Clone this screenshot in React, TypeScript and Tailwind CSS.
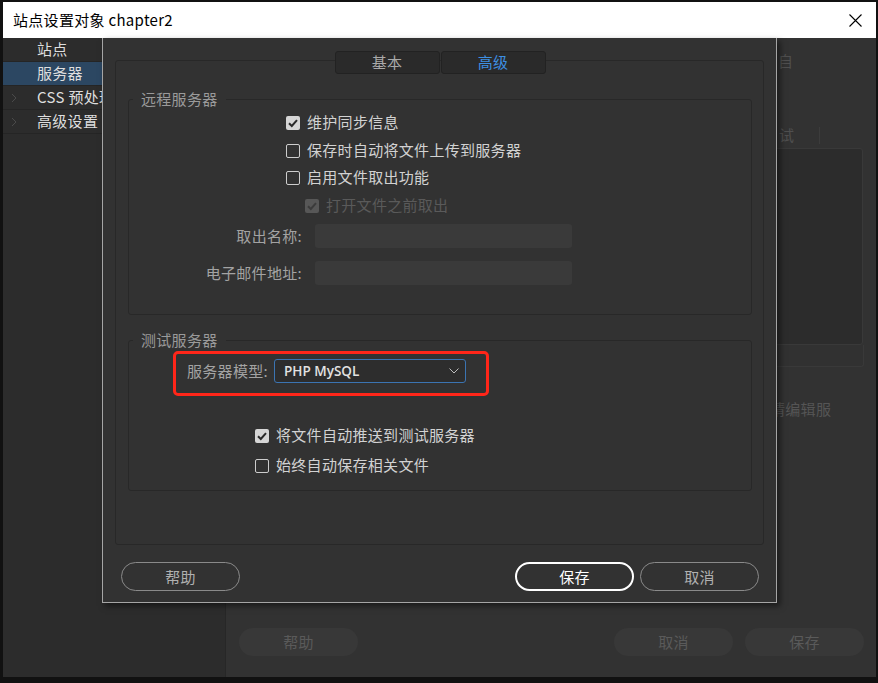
import React from "react";

const cjk = "font-['Noto_Sans_CJK_SC','Noto_Sans',sans-serif] tracking-[0.3px]";

function Tick({ color }: { color: string }) {
  return (
    <svg width="14" height="14" viewBox="0 0 14 14">
      <polyline points="3,7.2 5.8,10 11,4.2" fill="none" stroke={color} strokeWidth="2" />
    </svg>
  );
}

function Checkbox({ checked, disabled }: { checked?: boolean; disabled?: boolean }) {
  if (disabled) {
    return (
      <span className="flex h-[14px] w-[14px] shrink-0 items-center justify-center rounded-[2px] bg-[#575757]">
        <Tick color="#3b3b3b" />
      </span>
    );
  }
  if (checked) {
    return (
      <span className="flex h-[14px] w-[14px] shrink-0 items-center justify-center rounded-[2px] bg-[#d6d6d6]">
        <Tick color="#2a2a2a" />
      </span>
    );
  }
  return <span className="h-[14px] w-[14px] shrink-0 rounded-[2px] border border-[#cdcdcd]" />;
}

function CheckRow({
  label,
  checked,
  disabled,
  className,
}: {
  label: string;
  checked?: boolean;
  disabled?: boolean;
  className: string;
}) {
  return (
    <div className={`flex items-center gap-[7px] ${className}`}>
      <Checkbox checked={checked} disabled={disabled} />
      <span className={`-mt-[2px] ${disabled ? "text-[#5a5a5a]" : "text-[#d2d2d2]"}`}>{label}</span>
    </div>
  );
}

function Chevron() {
  return (
    <svg width="6" height="10" viewBox="0 0 6 10">
      <polyline points="1,1 5,5 1,9" fill="none" stroke="#4a4a4a" strokeWidth="1" />
    </svg>
  );
}

const sideItems = [
  { label: "站点", arrow: false, active: false },
  { label: "服务器", arrow: false, active: true },
  { label: "CSS 预处理器", arrow: true, active: false },
  { label: "高级设置", arrow: true, active: false },
];

function Sidebar() {
  return (
    <aside className="w-[223px] shrink-0 border-r border-[#272727] bg-[#2c2c2c]">
      {sideItems.map((it) => (
        <div
          key={it.label}
          className={`flex h-[24px] items-center border-b border-[#252525] ${it.active ? "bg-[#2c4762]" : ""}`}
        >
          <span className="flex w-[34px] shrink-0 pl-[8px]">{it.arrow && <Chevron />}</span>
          <span className="whitespace-nowrap text-[15px] text-[#dedede]">{it.label}</span>
        </div>
      ))}
    </aside>
  );
}

function Background() {
  return (
    <main className="flex flex-1 flex-col bg-[#323232]">
      <div className="flex flex-1 flex-col pl-[532px] pr-[12px] pt-[13px] text-[15px] leading-[20px] text-[#4f4f4f]">
        <div className="ml-[20px]">自</div>
        <div className="mt-[54px] flex h-[20px] items-center">
          <span className="ml-[21px]">试</span>
          <span className="ml-[25px] h-[17px] w-px bg-[#3c3c3c]" />
        </div>
        <div className="mr-[1px] mt-[3px] h-[197px] rounded-[3px] border border-[#393939] bg-[#2c2c2c]" />
        <div className="h-[22px] rounded-b-[3px] border border-t-0 border-[#393939] bg-[#313131]" />
        <div className="ml-[12px] mt-[32px] text-[#555]">请编辑服</div>
      </div>
      <div className="flex items-center pb-[21px] pl-[13px] pr-[12px] text-[15px] text-[#5a5a5a]">
        <button className="flex h-[28px] w-[119px] items-center justify-center rounded-full bg-[#383838]">帮助</button>
        <button className="ml-auto flex h-[28px] w-[119px] items-center justify-center rounded-full bg-[#383838]">取消</button>
        <button className="ml-[12px] flex h-[28px] w-[119px] items-center justify-center rounded-full bg-[#383838]">保存</button>
      </div>
    </main>
  );
}

function Overlay() {
  return (
    <div className="absolute left-[99px] top-[36px] flex h-[565px] w-[675px] flex-col border-x border-b border-[#a5a5a5] bg-[#323232] px-[12px] pb-[11px] pt-[22px] text-[15px] leading-[20px] shadow-[3px_3px_6px_rgba(0,0,0,0.5)]">
      <div className="h-[485px] rounded-[3px] border border-[#282828] pl-[12px] pr-[11px]">
        <div className="-mt-[10px] flex justify-center gap-[1px]">
          <div className="flex h-[23px] w-[105px] items-center justify-center rounded-[3px] border border-[#222] bg-[#2a2a2a] pb-[1px] text-[#a9a9a9]">
            基本
          </div>
          <div className="flex h-[23px] w-[105px] items-center justify-center rounded-[3px] border border-[#222] bg-[#2a2a2a] pb-[1px] text-[#3d8fe2]">
            高级
          </div>
        </div>

        <fieldset className="mt-[15px] rounded-[3px] border border-[#282828] pb-[29px]">
          <legend className="ml-[4px] px-[8px] text-[#9a9a9a]">远程服务器</legend>
          <CheckRow className="ml-[157px] h-[28px]" label="维护同步信息" checked />
          <CheckRow className="ml-[157px] h-[27px]" label="保存时自动将文件上传到服务器" />
          <CheckRow className="ml-[157px] h-[28px]" label="启用文件取出功能" />
          <CheckRow className="ml-[176px] h-[28px]" label="打开文件之前取出" checked disabled />
          <div className="mt-[4px] flex h-[24px] items-center">
            <span className="w-[173px] text-right text-[#a3a3a3]">取出名称:</span>
            <span className="ml-[13px] h-[24px] w-[257px] rounded-[3px] bg-[#3a3a3a]" />
          </div>
          <div className="mt-[13px] flex h-[24px] items-center">
            <span className="w-[173px] text-right text-[#a3a3a3]">电子邮件地址:</span>
            <span className="ml-[13px] h-[24px] w-[257px] rounded-[3px] bg-[#3a3a3a]" />
          </div>
        </fieldset>

        <fieldset className="mt-[15px] rounded-[3px] border border-[#282828] pb-[9px]">
          <legend className="ml-[4px] px-[8px] text-[#9a9a9a]">测试服务器</legend>
          <div className="ml-[44px] mt-[1px] flex h-[45px] w-[316px] items-start rounded-[5px] border-[3px] border-[#ff2619] pl-[11px] pt-[5px]">
            <span className="flex h-[24px] w-[87px] items-center text-[#a3a3a3]">服务器模型:</span>
            <div className="flex h-[24px] w-[192px] items-center justify-between rounded-[3px] border border-[#3b74b2] bg-[#2d2d2d] pl-[9px] pr-[6px]">
              <span className="font-['Open_Sans',sans-serif] text-[13.5px] font-semibold tracking-normal text-[#e2e2e2]">PHP MySQL</span>
              <svg width="10" height="6" viewBox="0 0 10 6">
                <polyline points="0.5,0.5 5,5 9.5,0.5" fill="none" stroke="#bdbdbd" strokeWidth="1" />
              </svg>
            </div>
          </div>
          <CheckRow className="ml-[126px] mt-[25px] h-[30px]" label="将文件自动推送到测试服务器" checked />
          <CheckRow className="ml-[126px] h-[30px]" label="始终自动保存相关文件" />
        </fieldset>
      </div>

      <div className="mt-[17px] flex pl-[6px] pr-[5px]">
        <button className="flex h-[29px] w-[119px] items-center justify-center rounded-full border border-[#8a8a8a] text-[#b0b0b0]">
          帮助
        </button>
        <button className="ml-auto flex h-[29px] w-[119px] items-center justify-center rounded-full border-2 border-white text-white">
          保存
        </button>
        <button className="ml-[6px] flex h-[29px] w-[119px] items-center justify-center rounded-full border border-[#8a8a8a] text-[#b0b0b0]">
          取消
        </button>
      </div>
    </div>
  );
}

export default function App() {
  return (
    <div className={`h-[683px] w-[878px] bg-[#111] pb-[6px] pl-[3px] pr-[2px] pt-[2px] ${cjk}`}>
      <div className="relative flex h-full flex-col">
        <header className="flex h-[36px] shrink-0 items-center justify-between bg-white pl-[10px] pr-[14px]">
          <span className="text-[15px] text-black">站点设置对象 chapter2</span>
          <svg width="13" height="13" viewBox="0 0 13 13">
            <path d="M0.5 0.5 L12.5 12.5 M12.5 0.5 L0.5 12.5" stroke="#000" strokeWidth="1.1" />
          </svg>
        </header>
        <div className="flex flex-1">
          <Sidebar />
          <Background />
        </div>
        <Overlay />
      </div>
    </div>
  );
}
